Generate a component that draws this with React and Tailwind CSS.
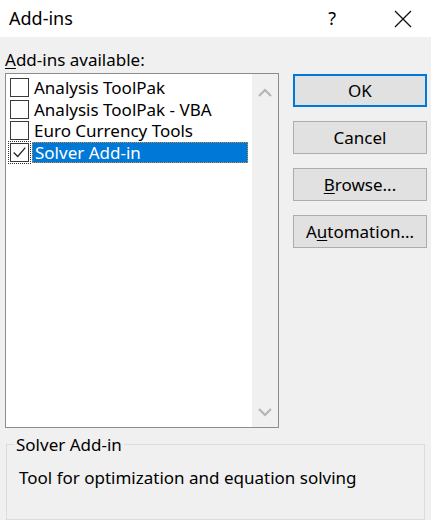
import React from 'react';

const items = [
  { label: 'Analysis ToolPak', checked: false },
  { label: 'Analysis ToolPak - VBA', checked: false },
  { label: 'Euro Currency Tools', checked: false },
  { label: 'Solver Add-in', checked: true, selected: true },
];

const font = { fontFamily: '"Noto Sans", "Open Sans", sans-serif' };

const Check = () => (
  <svg viewBox="0 0 19 19" className="h-full w-full">
    <path d="M3 9.5 L7.5 14 L16 4" fill="none" stroke="#222" strokeWidth="1.4" />
  </svg>
);

const Chevron = ({ up }) => (
  <svg width="14" height="9" viewBox="0 0 14 9">
    <path
      d={up ? 'M1 8 L7 2 L13 8' : 'M1 1 L7 7 L13 1'}
      fill="none"
      stroke="#b4b4b4"
      strokeWidth="2"
    />
  </svg>
);

function Button({ children, primary }) {
  return (
    <button
      className={`h-[33px] w-[134px] bg-[#e1e1e1] text-[17px] leading-none text-black ${
        primary ? 'border-2 border-[#0078d7]' : 'border border-[#adadad]'
      }`}
    >
      {children}
    </button>
  );
}

export default function App() {
  return (
    <div className="flex h-[520px] w-[431px] flex-col overflow-hidden bg-[#f0f0f0] text-black" style={font}>
      {/* title bar */}
      <div className="flex h-[37px] items-center bg-white pl-[9px]">
        <span className="text-[18px]">Add-ins</span>
        <span className="ml-auto mr-[57px] text-[18px]">?</span>
        <svg width="20" height="20" viewBox="0 0 20 20" className="mr-[18px]">
          <path d="M2 2 L18 18 M18 2 L2 18" stroke="#111" strokeWidth="1.3" />
        </svg>
      </div>

      <div className="flex pl-[5px] pt-[14px]">
        {/* left: list */}
        <div className="flex flex-col">
          <div className="h-[22px] text-[17px] leading-[18px]">
            <span className="underline underline-offset-2">A</span>dd-ins available:
          </div>
          <div className="flex h-[355px] w-[274px] border border-[#8c8c8c] bg-white">
            <div className="flex-1 pt-[3px]">
              {items.map((it) => (
                <div key={it.label} className="flex h-[21.5px] items-center">
                  <div
                    className={`ml-[3px] flex h-[21px] w-[21px] items-center justify-center ${
                      it.selected ? 'outline outline-1 outline-dotted outline-[#333]' : ''
                    }`}
                  >
                    <div className="h-[19px] w-[19px] border-[1.5px] border-[#3a3a3a] bg-white">
                      {it.checked && <Check />}
                    </div>
                  </div>
                  <div
                    className={`ml-[2px] flex h-[21px] items-center pl-[2px] text-[17px] leading-none ${
                      it.selected
                        ? 'w-[216px] border border-dotted border-[#d08a3a] bg-[#0078d7] text-white'
                        : ''
                    }`}
                  >
                    {it.label}
                  </div>
                </div>
              ))}
            </div>
            <div className="flex w-[26px] flex-col items-center justify-between bg-[#f0f0f0] pt-[14px] pb-[10px]">
              <Chevron up />
              <Chevron />
            </div>
          </div>
        </div>

        {/* right: buttons */}
        <div className="ml-[14px] flex flex-col gap-[14px] pt-[23px]">
          <Button primary>OK</Button>
          <Button>Cancel</Button>
          <Button>
            <span className="underline underline-offset-2">B</span>rowse...
          </Button>
          <Button>
            A<span className="underline underline-offset-2">u</span>tomation...
          </Button>
        </div>
      </div>

      {/* description group */}
      <div className="relative mx-[6px] mt-[16px] flex-1 border border-[#dcdcdc]">
        <span className="absolute -top-[13px] left-[7px] bg-[#f0f0f0] px-[2px] text-[17px]">
          Solver Add-in
        </span>
        <div className="pl-[12px] pt-[20px] text-[17px]">Tool for optimization and equation solving</div>
      </div>
    </div>
  );
}
